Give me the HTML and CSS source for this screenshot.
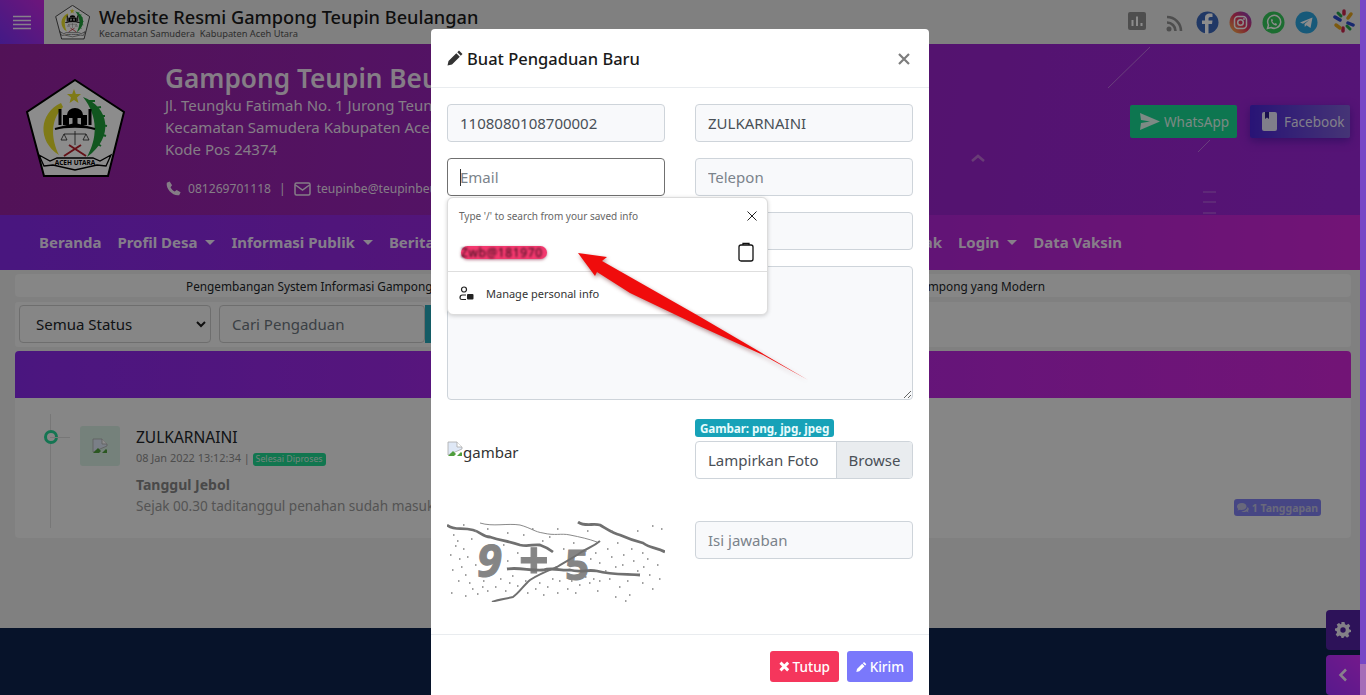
FILE: index.html
```html
<!DOCTYPE html>
<html lang="id">
<head>
<meta charset="utf-8">
<title>Website Resmi Gampong Teupin Beulangan</title>
<link rel="stylesheet" href="styles.css">
</head>
<body>
<svg class="defs" width="0" height="0" aria-hidden="true">
  <symbol id="logo" viewBox="0 0 100 100">
    <polygon points="50,1 99,33 83,97 19,97 2,33" fill="#fff" stroke="#000" stroke-width="2"/>
    <path d="M36 24C14 34 12 62 34 76C27 62 24 42 38 28Z" fill="#e8df2a"/>
    <path d="M58 18C84 28 90 58 62 78C72 60 74 38 58 18Z" fill="#1f9d3a"/>
    <path d="M64 22l6 0M70 29l6 -1M74 37l6 0M76 46l6 1M75 55l6 2M71 64l5 3" stroke="#1f9d3a" stroke-width="2"/>
    <polygon points="49,10 50.800,15 56,15 52,18.500 53.500,24 49,21 44.500,24 46,18.500 42,15 47.200,15" fill="#e8df2a"/>
    <path d="M42 36a8 7 0 0 1 16 0Z" fill="#000"/>
    <rect x="38" y="36" width="24" height="10" fill="#000"/>
    <rect x="33.500" y="30" width="3" height="16" fill="#000"/>
    <rect x="63.500" y="30" width="3" height="16" fill="#000"/>
    <rect x="44" y="39" width="3.500" height="7" fill="#fff"/><rect x="52.500" y="39" width="3.500" height="7" fill="#fff"/>
    <path d="M30 50C40 47 60 47 70 50L50 45Z" fill="#000" stroke="#000" stroke-width="2"/>
    <path d="M50 52V66M39 55H61M39 55l-3 6h6ZM61 55l-3 6h6Z" stroke="#222" stroke-width=".8" fill="none"/>
    <path d="M39 77L56 66M61 77L44 66" stroke="#b5202a" stroke-width="2"/>
    <path d="M14 76L25 82L32 79L68 79L75 82L86 76L81 87L72 86L50 91L28 86L19 87Z" fill="#fff" stroke="#000" stroke-width="1.300"/>
  </symbol>
  <symbol id="broken" viewBox="0 0 16 16">
    <path d="M1 1H10L15 6V8L1 14Z" fill="#dfe8f6" stroke="#a9a9a9" stroke-width=".8"/>
    <path d="M10 1V6H15" fill="#fff" stroke="#a9a9a9" stroke-width=".8"/>
    <path d="M1 15L6 10L9 13L7 15Z" fill="#4f9e3c"/>
    <path d="M10 15L14 11L15 12V15Z" fill="#4f9e3c"/>
  </symbol>
  <symbol id="pencil" viewBox="0 0 16 16">
    <path d="M12 .5L15.500 4L13.800 5.700L10.300 2.200ZM9.300 3.200L12.800 6.700L5 14.500L.5 15.500L1.500 11Z" fill="currentColor"/>
  </symbol>
</svg>

<div class="page">
  <header class="topbar">
    <button class="menu-btn" aria-label="Menu">
      <svg width="18" height="15" viewBox="0 0 18 15"><path d="M0 1.500H18M0 5.500H18M0 9.500H18M0 13.500H18" stroke="#fff" stroke-opacity=".9" stroke-width="1.500"/></svg>
    </button>
    <svg class="top-logo" viewBox="0 0 100 100"><use href="#logo" width="100" height="100"/><text x="50" y="86" class="logo-text" text-anchor="middle">ACEH UTARA</text></svg>
    <div class="brand">
      <div class="brand-title">Website Resmi Gampong Teupin Beulangan</div>
      <div class="brand-sub">Kecamatan Samudera&nbsp; Kabupaten Aceh Utara</div>
    </div>
    <div class="top-icons">
      <svg class="ic-chart" width="18" height="18" viewBox="0 0 18 18"><rect width="18" height="18" rx="2" fill="#8f8f8f"/><path d="M4.500 8V14M9 4.500V14M13.500 11V14" stroke="#fff" stroke-width="2"/></svg>
      <svg class="ic-rss" width="17" height="17" viewBox="0 0 17 17"><circle cx="3" cy="14" r="2.500" fill="#8f8f8f"/><path d="M1 7.500A8.500 8.500 0 0 1 9.500 16M1 2A14 14 0 0 1 15 16" fill="none" stroke="#8f8f8f" stroke-width="2.600"/></svg>
      <svg class="ic-soc" width="23" height="23" viewBox="0 0 23 23"><circle cx="11.500" cy="11.500" r="11" fill="#3b66b8"/><path d="M12.500 23V13H16L16.500 9.500H12.500V7.500C12.500 6 13.500 6 16.500 6V2.800C11 2 9 4 9 7V9.500H6V13H9V23Z" fill="#fff"/></svg>
      <svg class="ic-soc" width="23" height="23" viewBox="0 0 23 23"><defs><linearGradient id="ig" x1="0" y1="1" x2="1" y2="0"><stop offset="0" stop-color="#f9c846"/><stop offset=".5" stop-color="#e8365d"/><stop offset="1" stop-color="#7a3fd0"/></linearGradient></defs><circle cx="11.500" cy="11.500" r="11" fill="url(#ig)"/><rect x="5.500" y="5.500" width="12" height="12" rx="3.500" fill="none" stroke="#fff" stroke-width="1.500"/><circle cx="11.500" cy="11.500" r="2.800" fill="none" stroke="#fff" stroke-width="1.500"/><circle cx="15" cy="8" r=".9" fill="#fff"/></svg>
      <svg class="ic-soc" width="23" height="23" viewBox="0 0 23 23"><circle cx="11.500" cy="11.500" r="11" fill="#34c759"/><path d="M5.500 17.500L6.500 14A6.500 6.500 0 1 1 9 16.500Z" fill="none" stroke="#fff" stroke-width="1.500"/><path d="M9 8.500C9 12 11.500 14.500 14.500 14.500L15 13L13.500 12L12.800 12.800C11.800 12.300 10.800 11.300 10.300 10.300L11 9.500L10.200 8Z" fill="#fff"/></svg>
      <svg class="ic-soc" width="23" height="23" viewBox="0 0 23 23"><circle cx="11.500" cy="11.500" r="11" fill="#2aa3dd"/><path d="M5 11.500L17.500 6.500L15.500 17L11.500 14.200L9.800 16L9.500 13L14.500 8.800L8 12.700Z" fill="#fff"/></svg>
      <svg class="ic-color" width="22" height="24" viewBox="0 0 22 24"><path d="M11 2V5M10 19V22" stroke="#c8234a" stroke-width="3.500" stroke-linecap="round"/><path d="M2 8L7 11M15 14L20 16" stroke="#2b49c9" stroke-width="3.500" stroke-linecap="round"/><path d="M18 5L15 9M3 16L7 19" stroke="#e2a21c" stroke-width="3.500" stroke-linecap="round"/><path d="M5 4L8 7M14 17L17 20" stroke="#23a04a" stroke-width="3"  stroke-linecap="round"/></svg>
    </div>
  </header>

  <section class="hero">
    <svg class="hero-lines" viewBox="0 0 1360 171" aria-hidden="true">
      <path d="M1108 44L1150 3M1198 108L1210 96M1203 148h13M1203 158h13M1203 169h13" stroke="#fff" stroke-opacity=".45" stroke-width=".8" fill="none"/>
    </svg>
    <svg class="hero-chev" width="14" height="8" viewBox="0 0 14 8" aria-hidden="true"><path d="M1 7L7 2L13 7" fill="none" stroke="#c070d8" stroke-width="2.500"/></svg>
    <svg class="hero-logo" viewBox="0 0 100 100"><use href="#logo" width="100" height="100"/><text x="50" y="86" class="logo-text" text-anchor="middle">ACEH UTARA</text></svg>
    <div class="hero-text">
      <h1>Gampong Teupin Beulangan</h1>
      <p>Jl. Teungku Fatimah No. 1 Jurong Teungoh</p>
      <p>Kecamatan Samudera Kabupaten Aceh Utara</p>
      <p>Kode Pos 24374</p>
      <div class="contact">
        <svg width="17" height="17" viewBox="0 0 24 24"><path d="M6.600 2L10 7.500L7.800 10.300C9 13 11 15 13.700 16.200L16.500 14L22 17.400L20 21.500C11 23 1 13 2.500 4Z" fill="currentColor"/></svg>
        <span>081269701118</span><span class="sep">|</span>
        <svg width="17" height="14" viewBox="0 0 17 14"><rect x="1" y="1" width="15" height="12" rx="1.500" fill="none" stroke="currentColor" stroke-width="1.500"/><path d="M1.500 3L8.500 8L15.500 3" fill="none" stroke="currentColor" stroke-width="1.500"/></svg>
        <span>teupinbe@teupinbeulangan.desa.id</span>
      </div>
    </div>
    <div class="hero-btns">
      <a class="hbtn hbtn-wa"><svg width="20" height="17" viewBox="0 0 20 17"><path d="M0 0L20 8.500L0 17L1 10L10 8.500L1 7Z" fill="currentColor"/></svg>WhatsApp</a>
      <a class="hbtn hbtn-fb"><svg width="15" height="19" viewBox="0 0 15 19"><path d="M2 0H13A2 2 0 0 1 15 2V17A2 2 0 0 1 13 19H2A2 2 0 0 1 0 17V2A2 2 0 0 1 2 0Z" fill="currentColor"/><path d="M3 0H7V7L5 5.500L3 7Z" fill="#2f1c8c"/></svg>Facebook</a>
    </div>
  </section>

  <nav class="nav">
    <ul class="nav-list">
      <li>Beranda</li>
      <li class="caret">Profil Desa</li>
      <li class="caret">Informasi Publik</li>
      <li class="caret">Berita</li>
    </ul>
    <ul class="nav-list">
      <li>Kontak</li>
      <li class="caret">Login</li>
      <li>Data Vaksin</li>
    </ul>
  </nav>

  <main class="main">
    <div class="ticker">
      <span>Pengembangan System Informasi Gampong</span>
      <span>Gampong yang Modern</span>
    </div>
    <div class="filter">
      <div class="select-wrap">
        <select class="f-select"><option>Semua Status</option></select>
        <svg width="10" height="7" viewBox="0 0 10 7"><path d="M1 1L5 5L9 1" fill="none" stroke="#1c1c1c" stroke-width="2"/></svg>
      </div>
      <div class="search">
        <input class="f-input" placeholder="Cari Pengaduan">
        <button class="f-btn" aria-label="Cari"></button>
      </div>
    </div>
    <div class="board">
      <div class="board-band"></div>
      <div class="board-body">
        <div class="tl">
          <span class="tl-dot"></span>
        </div>
        <div class="thumb"><svg width="16" height="16"><use href="#broken"/></svg></div>
        <div class="post">
          <div class="post-name">ZULKARNAINI</div>
          <div class="post-meta">08 Jan 2022 13:12:34 | <span class="tag">Selesai Diproses</span></div>
          <div class="post-title">Tanggul Jebol</div>
          <div class="post-desc">Sejak 00.30 taditanggul penahan sudah masuk</div>
        </div>
        <span class="reply"><svg width="12" height="10" viewBox="0 0 12 10"><path d="M5 0C2 0 0 1.500 0 3.500C0 4.500 .5 5.300 1.300 6L.5 7.500L3 6.800C6.500 7.500 9.500 6 9.500 3.500C9.500 1.500 7.500 0 5 0ZM10.500 4C10 7 7 8.500 4.500 8C5.500 9 8 9.300 9.800 8.500L11.500 9.500L11 7.800C12 6.800 12.200 5 10.500 4Z" fill="currentColor"/></svg>1 Tanggapan</span>
      </div>
    </div>
  </main>
  <footer class="footer"></footer>

  <div class="side-tabs">
    <div class="side-tab tab-gear"><svg width="16" height="16" viewBox="0 0 16 16"><path d="M6.500 0H9.500L10 2.200L11.500 2.900L13.500 1.700L15.300 4L13.800 5.700L14.200 7.200L16 8V10L14 10.600L13.300 12.100L14.300 14.100L12 15.700L10.500 14.200L9 14.500L8.500 16H6.500L6 14.200L4.500 13.600L2.500 14.700L.7 12.500L2 10.800L1.700 9.300L0 8.500V6.500L2 6L2.700 4.400L1.700 2.500L4 .9L5.500 2.300L6.300 2Z" fill="#fff" fill-opacity=".9"/><circle cx="8" cy="8" r="2.700" fill="#5221a2"/></svg></div>
    <div class="side-tab tab-back"><svg width="10" height="14" viewBox="0 0 10 14"><path d="M8 1.500L2.500 7L8 12.500" fill="none" stroke="#fff" stroke-opacity=".9" stroke-width="2.500"/></svg></div>
  </div>

  <div class="backdrop">
    <div class="modal">
      <div class="modal-head">
        <svg class="pen" width="16" height="16"><use href="#pencil"/></svg>
        <h2>Buat Pengaduan Baru</h2>
        <svg class="close" width="12" height="12" viewBox="0 0 12 12"><path d="M1 1L11 11M11 1L1 11" stroke="#7d7d7d" stroke-width="2.200"/></svg>
      </div>
      <div class="modal-body">
        <input class="field" value="1108080108700002">
        <input class="field" value="ZULKARNAINI">
        <div class="focus-wrap"><input class="field field-focus" placeholder="Email"></div>
        <input class="field" placeholder="Telepon">
        <input class="field" placeholder="Judul Pengaduan">
        <input class="field" placeholder="Alamat">
        <textarea class="field area"></textarea>
        <div class="pic-row">
          <div class="alt-img"><svg width="16" height="16"><use href="#broken"/></svg><span>gambar</span></div>
          <div class="upload-col">
            <span class="hint">Gambar: png, jpg, jpeg</span>
            <div class="upload"><span class="up-label">Lampirkan Foto</span><span class="up-btn">Browse</span></div>
          </div>
        </div>
        <div class="cap-row">
          <svg class="captcha" viewBox="0 0 218 81" aria-label="captcha">
            <text x="30" y="56" class="cap-digit cap-it">9</text>
            <text x="72" y="58" class="cap-digit cap-plus">+</text>
            <text x="118" y="59" class="cap-digit cap-five">5</text>
            <path d="M0 4C8 10 14 6 26 9C34 11 36 16 43 16C55 20 62 20 73 24C82 26 86 23 93 24C99 26 102 28 106 31" fill="none" stroke="#707070" stroke-width="2.800"/>
            <path d="M33 2C46 6 60 2 73 4C84 7 88 11 96 12C108 15 114 12 123 14C133 16 142 18 150 21" fill="none" stroke="#8a8a8a" stroke-width="1"/>
            <path d="M131 1C138 6 146 2 153 4C160 8 165 12 173 14C182 18 188 20 196 22C204 28 210 26 218 31" fill="none" stroke="#707070" stroke-width="2.800"/>
            <path d="M60 48C72 46 84 50 96 49C106 46 114 50 123 49C134 52 140 48 150 50C164 54 178 53 193 54" fill="none" stroke="#707070" stroke-width="2.800"/>
            <path d="M153 20C146 26 140 27 133 32C124 38 118 41 110 46C100 50 92 53 83 59C76 65 72 72 66 76C58 78 52 78 45 81" fill="none" stroke="#707070" stroke-width="2"/>
            <path class="cap-dots" d="M6 14h1.500M8 25h1.500M12 38h1.500M5 49h1.500M16 28h1.500M20 36h1.500M11 60h1.500M22 62h1.500M25 68h1.500M18 75h1.500M4 72h1.500M30 73h1.500M40 70h1.500M53 58h1.500M62 62h1.500M70 65h1.500M78 60h1.500M88 68h1.500M100 66h1.500M110 72h1.500M120 68h1.500M132 64h1.500M142 62h1.500M150 70h1.500M162 58h1.500M172 66h1.500M182 74h1.500M195 62h1.500M205 68h1.500M212 58h1.500M196 46h1.500M186 40h1.500M176 34h1.500M164 36h1.500M152 42h1.500M143 38h1.500M210 44h1.500M200 38h1.500M214 8h1.500M205 5h1.500M190 10h1.500M170 22h1.500M164 10h1.500M140 10h1.500M126 22h1.500M110 8h1.500M95 20h1.500M85 8h1.500M60 12h1.500M56 24h1.500M70 32h1.500M60 40h1.500M24 18h1.500M40 8h1.500M16 4h1.500M146 58h1.500M158 50h1.500M175 44h1.500M168 76h1.500M178 80h1.500M128 72h1.500M96 74h1.500M48 66h1.500M36 60h1.500M58 70h1.500M80 72h1.500M112 60h1.500M138 30h1.500M10 20h1.500M14 46h1.500M3 34h1.500M28 44h1.500M18 54h1.500M35 66h1.500M65 55h1.500M92 62h1.500M105 58h1.500M124 60h1.500M138 56h1.500M152 60h1.500M168 46h1.500M180 60h1.500M190 50h1.500M202 54h1.500M160 28h1.500M148 32h1.500M184 28h1.500M195 32h1.500M116 28h1.500M102 16h1.500M76 14h1.500M50 30h1.500M28 10h1.500" stroke="#808080" stroke-width="1.700" fill="none"/>
          </svg>
          <input class="field" placeholder="Isi jawaban">
        </div>
      </div>
      <div class="modal-foot">
        <button class="act act-close"><svg width="11" height="11" viewBox="0 0 11 11"><path d="M1.500 1.500L9.500 9.500M9.500 1.500L1.500 9.500" stroke="currentColor" stroke-width="3"/></svg>Tutup</button>
        <button class="act act-send"><svg width="14" height="14"><use href="#pencil"/></svg>Kirim</button>
      </div>
    </div>

    <div class="autofill">
      <div class="af-head">
        <span>Type '/' to search from your saved info</span>
        <svg width="10" height="10" viewBox="0 0 10 10"><path d="M.5 .5L9.500 9.500M9.500 .5L.5 9.500" stroke="#222" stroke-width="1"/></svg>
      </div>
      <div class="af-item">
        <span class="af-red"><span class="af-blur">Zwb@181970</span></span>
        <svg width="16" height="20" viewBox="0 0 16 20"><rect x="1" y="3" width="14" height="16" rx="2" fill="none" stroke="#111" stroke-width="1.300"/><path d="M5 3V1.500H11V3" fill="none" stroke="#111" stroke-width="1.300"/></svg>
      </div>
      <div class="af-foot">
        <svg width="15" height="15" viewBox="0 0 15 15"><circle cx="5" cy="3.500" r="2.500" fill="none" stroke="#222" stroke-width="1.200"/><path d="M7 9H3.500C1.500 9 1 10.500 1 12C1 13 2 13.500 3 13.500H7" fill="none" stroke="#222" stroke-width="1.200"/><rect x="8" y="8" width="6.500" height="5.500" rx="1" fill="#222"/></svg>
        <span>Manage personal info</span>
      </div>
    </div>

    <svg class="arrow" viewBox="0 0 240 136" aria-hidden="true">
      <polygon points="3,4 32,8 27,12 122,66 233,131 188,106 122,76 55,44 22,23 20,27" fill="#f00c0c"/>
    </svg>
  </div>
</div>
<div class="scrollbar"></div>
</body>
</html>
```
FILE: styles.css
```css
* { box-sizing: border-box; }
html, body { margin: 0; height: 100%; }
body {
  display: flex;
  height: 100vh;
  overflow: hidden;
  font-family: "Noto Sans", "Liberation Sans", sans-serif;
  font-size: 15px;
  color: #212529;
  background: #e9e9e9;
}
.defs { position: absolute; }
.logo-text { font: 700 6.500px "Noto Sans", sans-serif; fill: #000; }
ul { list-style: none; margin: 0; padding: 0; }

.page { position: relative; flex: 1; min-width: 0; display: flex; flex-direction: column; overflow: hidden; }
.scrollbar { width: 6px; background: linear-gradient(#7646c6 0, #7646c6 664px, #a56db8 664px); }

/* top bar */
.topbar { height: 44px; flex: none; display: flex; align-items: center; background: #e9e9e9; }
.menu-btn {
  width: 44px; height: 44px; border: 0; padding: 0;
  display: flex; align-items: center; justify-content: center;
  background: linear-gradient(45deg, #7a30f5, #c828e0);
}
.top-logo { width: 35px; height: 35px; margin-left: 11px; }
.brand { margin-left: 9px; padding-top: 1px; }
.brand-title { font-size: 18.200px; font-weight: 500; line-height: 21px; color: #1a1a1a; white-space: nowrap; }
.brand-sub { font-size: 9.300px; line-height: 11px; color: #555; white-space: nowrap; }
.top-icons { margin-left: auto; padding-right: 5px; display: flex; align-items: center; }
.ic-chart { margin-right: 20px; margin-bottom: 3px; }
.ic-rss { margin-right: 13px; margin-top: 3px; }
.ic-soc { margin-right: 10px; }
.ic-color { margin-left: 5px; margin-bottom: 3px; }

/* hero */
.hero {
  position: relative; height: 171px; flex: none; display: flex;
  background: linear-gradient(100deg, #96229f 0, #9823c4 50%, #9c25d8 100%);
  color: rgba(255, 255, 255, .88);
}
.hero-lines { position: absolute; left: 0; top: 0; width: 1360px; height: 171px; }
.hero-chev { position: absolute; left: 971px; top: 110px; }
.hero-logo { width: 100px; height: 100px; margin: 35px 0 0 25px; flex: none; }
.hero-text { margin-left: 40px; padding-top: 17px; white-space: nowrap; }
.hero-text h1 { margin: 0 0 -1px; font-size: 26.200px; line-height: 34px; font-weight: 600; }
.hero-text p { margin: 0; font-size: 15px; line-height: 22px; }
.contact { display: flex; align-items: center; gap: 6px; margin-top: 20px; font-size: 12.100px; line-height: 17px; }
.sep { margin: 0 2px; }
.hero-btns { position: absolute; right: 10px; top: 61px; display: flex; gap: 13px; }
.hbtn { height: 33px; display: flex; align-items: center; gap: 4px; padding: 0 0 0 10px; font-size: 13.500px; border-radius: 2px; white-space: nowrap; }
.hbtn svg { flex: none; }
.hbtn-wa { background: #18d893; width: 107px; }
.hbtn-fb { background: linear-gradient(90deg, #4a24d8, #7f60d8); width: 100px; gap: 7px; padding-left: 12px; box-shadow: 0 3px 10px rgba(60, 20, 160, .6); }

/* nav */
.nav {
  height: 55px; flex: none; display: flex; align-items: center; justify-content: space-between;
  padding: 0 238px 2px 39px;
  background: linear-gradient(90deg, #8528e8 0, #a026d8 50%, #d026d8 100%);
  color: rgba(255, 255, 255, .9);
}
.nav-list { display: flex; gap: 16px; font-size: 15px; font-weight: 700; white-space: nowrap; letter-spacing: -.02px; }
.caret::after {
  content: ""; display: inline-block; margin-left: 8px; vertical-align: 3px;
  border-left: 5px solid transparent; border-right: 5px solid transparent; border-top: 5px solid currentColor;
}

/* content */
.main { flex: 1; min-height: 0; padding: 4px 9px 0 15px; }
.ticker {
  height: 23px; display: flex; justify-content: space-between; align-items: center;
  padding: 0 306px 0 171px; font-size: 11.800px; white-space: nowrap;
  background: #f4f4f4; border-radius: 4px;
}
.filter {
  height: 45px; margin-top: 5px; padding: 3px 4px; display: flex; gap: 8px;
  background: #f4f4f4; border-radius: 3px;
}
.select-wrap { position: relative; width: 192px; }
.select-wrap svg { position: absolute; right: 5px; top: 16px; }
.f-select, .f-input {
  height: 38px; border: 1px solid #c9c9c9; border-radius: 4px;
  font: inherit; background: #f4f4f4; padding: 0 16px; color: #212529; appearance: none;
}
.f-select { width: 100%; }
.search { flex: 1; display: flex; }
.f-input { width: 206px; padding: 0 12px; }
.f-input::placeholder { color: #6c757d; }
.f-btn { width: 80px; height: 38px; border: 0; background: #26a6b8; }
.board { margin-top: 4px; border-radius: 4px; background: #f4f4f4; height: 187px; }
.board-band { height: 47px; border-radius: 4px 4px 0 0; background: linear-gradient(90deg, #8828e8, #d026d8); }
.board-body { position: relative; display: flex; padding: 28px 30px 0 21px; }
.tl { position: relative; width: 44px; height: 114px; margin-top: -12px; flex: none; }
.tl::before { content: ""; position: absolute; left: 14px; top: 0; bottom: 0; width: 1px; background: #d9d9d9; }
.tl::after { content: ""; position: absolute; left: 14px; top: 23px; width: 20px; height: 1px; background: #d9d9d9; }
.tl-dot { position: absolute; left: 8px; top: 16px; width: 14px; height: 14px; border: 3px solid #26d696; border-radius: 50%; background: #f4f4f4; }
.thumb { width: 40px; height: 40px; flex: none; display: flex; align-items: center; justify-content: center; border-radius: 3px; background: #d5ebe0; }
.post { margin-left: 16px; }
.post-name { font-size: 15.500px; line-height: 20px; margin-top: 1px; color: #212529; }
.post-meta { font-size: 10.900px; line-height: 16px; color: #8c8c8c; margin-top: 3px; }
.tag { display: inline-block; font-size: 8.800px; line-height: 13px; padding: 0 3px; color: #d6f0e0; background: #1fd890; border-radius: 3px; vertical-align: 0; }
.post-title { font-size: 14px; font-weight: 700; line-height: 18px; margin-top: 10px; color: #858585; }
.post-desc { font-size: 13.600px; line-height: 18px; margin-top: 3px; color: #999; white-space: nowrap; }
.reply {
  position: absolute; right: 30px; top: 101px; height: 17px; width: 87px;
  display: flex; align-items: center; justify-content: center; gap: 3px;
  font-size: 10.500px; font-weight: 700; color: #c0c0e0; background: #8080f0; border-radius: 3px;
}
.footer { height: 67px; flex: none; background: #0d244e; }
.side-tabs { position: absolute; right: 0; bottom: 0; display: flex; flex-direction: column; gap: 5px; }
.side-tab { width: 34px; height: 40px; display: flex; align-items: center; justify-content: center; border-radius: 4px 0 0 4px; }
.tab-gear { background: #5221a2; }
.tab-back { background: linear-gradient(45deg, #a02fff, #d22fff); }

/* modal */
.backdrop { position: absolute; inset: 0; background: rgba(0, 0, 0, .45); }
.modal { position: absolute; left: 431px; top: 29px; width: 498px; background: #fff; border-radius: 4px 4px 0 0; }
.modal-head { height: 59px; display: flex; align-items: center; padding: 0 16px; border-bottom: 1px solid #e9ecef; }
.pen { color: #333; margin-right: 4px; }
.modal-head h2 { margin: 0; font-size: 16.500px; font-weight: 500; color: #1a1a1a; }
.close { margin-left: auto; margin-right: 3px; margin-top: 2px; }
.modal-body { display: grid; grid-template-columns: 218px 218px; column-gap: 30px; row-gap: 16px; padding: 16px 16px 32px; }
.field {
  width: 100%; height: 38px; padding: 0 12px; font: inherit; color: #495057;
  background: #f8f9fb; border: 1px solid #ced4da; border-radius: 4px; outline: 0; display: block;
}
.field::placeholder { color: #7b838b; }
.focus-wrap { position: relative; }
.focus-wrap::after { content: ""; position: absolute; left: 13px; top: 11px; width: 1px; height: 17px; background: #333; }
.field-focus { background: #fff; border-color: #707070; }
.area { grid-column: 1 / 3; height: 134px; resize: both; }
.pic-row, .cap-row { grid-column: 1 / 3; display: grid; grid-template-columns: 218px 218px; column-gap: 30px; }
.pic-row { margin-top: 3px; }
.cap-row { margin-top: 26px; }
.alt-img { display: flex; align-items: flex-start; font-size: 15px; padding-top: 22px; color: #333; }
.alt-img span { line-height: 22px; }
.upload-col { display: flex; flex-direction: column; align-items: flex-start; }
.hint { height: 18px; padding: 0 5px; margin-bottom: 4px; font-size: 11.700px; font-weight: 700; line-height: 18px; color: #e6fbfc; background: #17a2b8; border-radius: 3px; letter-spacing: -.1px; }
.upload { width: 218px; height: 38px; display: flex; border: 1px solid #ced4da; border-radius: 4px; color: #495057; line-height: 36px; }
.up-label { flex: 1; padding-left: 12px; }
.up-btn { width: 76px; text-align: center; background: #e9ecef; border-left: 1px solid #ced4da; border-radius: 0 3px 3px 0; }
.captcha { width: 218px; height: 81px; display: block; }
.cap-digit { font: 700 45px "Noto Sans", sans-serif; fill: #858585; stroke: #858585; stroke-width: 1; }
.cap-it { font-style: italic; }
.cap-plus { font-size: 52px; }
.cap-five { font-size: 42px; }
.modal-foot { height: 64px; display: flex; justify-content: flex-end; gap: 8px; padding: 16px 16px 0; border-top: 1px solid #e9ecef; }
.act { height: 31px; display: flex; align-items: center; gap: 3px; border: 0; padding: 0 9px; font: 500 13.500px "Noto Sans", sans-serif; color: #fff; border-radius: 3px; }
.act-close { background: #f5365c; width: 69px; }
.act-send { background: #7a78fb; width: 66px; }

/* browser autofill popup */
.autofill {
  position: absolute; left: 447px; top: 197px; width: 321px; height: 118px;
  background: #fff; border-radius: 6px; border: 1px solid #dcdcdc;
  box-shadow: 0 1px 4px rgba(0, 0, 0, .18);
}
.af-head { height: 35px; display: flex; align-items: center; justify-content: space-between; padding: 0 10px 0 11px; font-size: 10px; color: #666; }
.af-item { height: 39px; display: flex; align-items: center; justify-content: space-between; padding: 0 13px; border-bottom: 1px solid #dedede; }
.af-red { position: relative; width: 86px; height: 13px; background: #f3386e; border-radius: 7px; box-shadow: 0 1px 3px rgba(120, 0, 40, .5); display: flex; align-items: center; }
.af-blur { font-size: 12px; letter-spacing: .6px; color: #2a0c18; filter: blur(.9px); white-space: nowrap; }
.af-foot { height: 42px; display: flex; align-items: center; gap: 12px; padding-left: 11px; font-size: 11px; color: #333; }
.arrow { position: absolute; left: 575px; top: 249px; width: 240px; height: 136px; filter: drop-shadow(1px 2px 2px rgba(90, 0, 0, .45)); }
```
